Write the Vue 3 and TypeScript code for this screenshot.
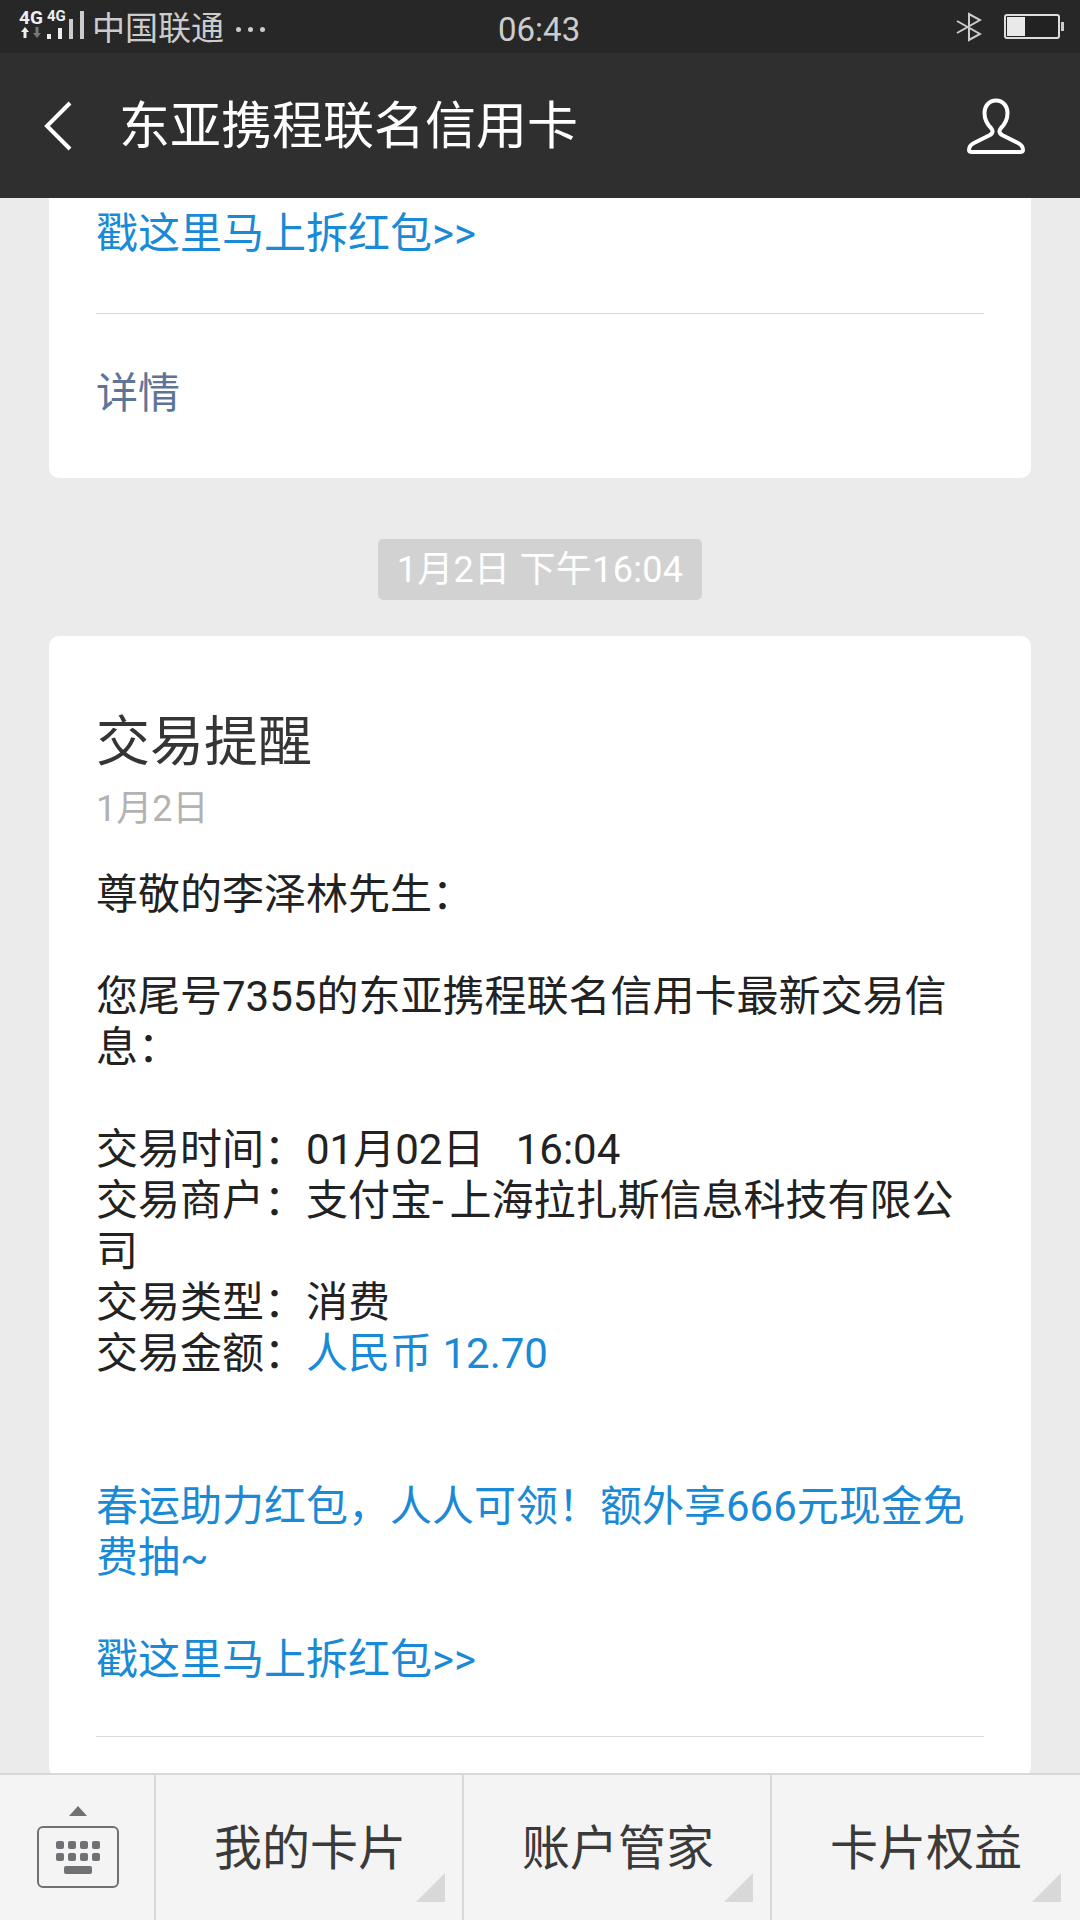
<script setup lang="ts">
const menus = ['我的卡片', '账户管家', '卡片权益']
</script>

<template>
  <div class="screen">
    <div class="status">
      <div class="net">
        <div class="net-col">
          <span class="g1">4G</span>
          <svg class="arrows" width="20" height="11" viewBox="0 0 20 11">
            <path d="M4 0 8 5H5.5V11H2.5V5H0z" fill="#eee" />
            <path d="M14.5 0h3v6H20l-4 5-4-5h2.500z" fill="#777" />
          </svg>
        </div>
        <span class="g2">4G</span>
        <svg class="bars" width="38" height="30" viewBox="0 0 38 30">
          <rect x="0" y="24" width="4" height="5" fill="#eee" />
          <rect x="11" y="18" width="4" height="11" fill="#eee" />
          <rect x="22" y="9" width="4" height="20" fill="#ccc" />
          <rect x="33" y="1" width="4" height="28" fill="#ccc" />
        </svg>
      </div>
      <span class="carrier">中国联通</span>
      <span class="dots"><i></i><i></i><i></i></span>
      <span class="time">06:43</span>
      <svg class="bt" width="26" height="30" viewBox="0 0 26 30">
        <path d="M1 9 24 22 13 28V2L24 8 1 21" fill="none" stroke="#ccc" stroke-width="2" />
      </svg>
      <div class="battery">
        <div class="battery-fill"></div>
      </div>
      <div class="battery-nub"></div>
    </div>

    <div class="nav">
      <svg class="back" width="30" height="50" viewBox="0 0 30 50">
        <path d="M27 2 4 25 27 48" fill="none" stroke="#fff" stroke-width="4" />
      </svg>
      <span class="nav-title">东亚携程联名信用卡</span>
      <svg class="person" width="60" height="56" viewBox="0 0 60 56">
        <path
          d="M30 2.500C23 2.500 18.500 8 18.500 15C18.500 22 22 27 25 30C27.500 33 27 35 24 37L8 45C4 47 3 50 3 52C3 54 4 54 6 54H54C56 54 57 54 57 52C57 50 56 47 52 45L36 37C33 35 32.500 33 35 30C38 27 41.500 22 41.500 15C41.500 8 37 2.500 30 2.500z"
          fill="none"
          stroke="#fff"
          stroke-width="4"
        />
      </svg>
    </div>

    <div class="feed">
      <div class="card card-top">
        <div class="link top-link">戳这里马上拆红包&gt;&gt;</div>
        <div class="rule"></div>
        <div class="detail">详情</div>
      </div>

      <div class="stamp-row"><span class="stamp">1月2日 下午16:04</span></div>

      <div class="card card-main">
        <div class="title">交易提醒</div>
        <div class="date">1月2日</div>
        <div class="body">
          <p>尊敬的李泽林先生：</p>
          <p>您尾号7355的东亚携程联名信用卡最新交易信息：</p>
          <p>
            交易时间：01月02日&nbsp;&nbsp;&nbsp;16:04<br />
            交易商户：支付宝-<span class="after-hy">上海拉扎斯信息科技有限公司</span><br />
            交易类型：消费<br />
            交易金额：<span class="link">人民币 12.70</span>
          </p>
          <p class="gap link">春运助力红包，人人可领！额外享666元现金免费抽~</p>
          <p class="link">戳这里马上拆红包&gt;&gt;</p>
        </div>
        <div class="rule end-rule"></div>
      </div>
    </div>

    <div class="tabbar">
      <div class="kbd-cell">
        <svg width="82" height="82" viewBox="0 0 82 82">
          <path d="M41 0 50 10H32z" fill="#6f7175" />
          <rect x="1" y="21" width="80" height="60" rx="5" fill="none" stroke="#6f7175" stroke-width="2" />
          <g fill="#6f7175">
            <rect x="19" y="35" width="8" height="8" rx="2" />
            <rect x="31" y="35" width="8" height="8" rx="2" />
            <rect x="43" y="35" width="8" height="8" rx="2" />
            <rect x="55" y="35" width="8" height="8" rx="2" />
            <rect x="19" y="47" width="8" height="8" rx="2" />
            <rect x="31" y="47" width="8" height="8" rx="2" />
            <rect x="43" y="47" width="8" height="8" rx="2" />
            <rect x="55" y="47" width="8" height="8" rx="2" />
            <rect x="27" y="60" width="28" height="8" rx="2" />
          </g>
        </svg>
      </div>
      <div v-for="m in menus" :key="m" class="menu">
        {{ m }}
        <span class="corner"></span>
      </div>
    </div>
  </div>
</template>

<style scoped>
.screen {
  position: relative;
  width: 1080px;
  height: 1920px;
  display: flex;
  flex-direction: column;
  overflow: hidden;
  background: #ebebeb;
  font-family: Roboto, "Noto Sans CJK SC", sans-serif;
  color: #222;
}
.status {
  height: 53px;
  flex: none;
  display: flex;
  align-items: center;
  padding: 0 16px 0 18px;
  background: #272727;
  color: #ccc;
}
.net {
  display: flex;
  align-items: flex-start;
  height: 30px;
  width: 74px;
  margin-top: -4px;
}
.net-col {
  display: flex;
  flex-direction: column;
  align-items: center;
  width: 26px;
}
.g1 {
  font-size: 19px;
  line-height: 16px;
  font-weight: 700;
  color: #eee;
}
.g2 {
  font-size: 15px;
  line-height: 13px;
  font-weight: 700;
  margin-left: 3px;
  color: #eee;
}
.arrows {
  margin-top: 1px;
}
.bars {
  margin-left: -19px;
}
.carrier {
  font-size: 33px;
  line-height: 40px;
  margin-top: 5px;
}
.dots {
  display: flex;
  gap: 7px;
  margin: 5px 0 0 12px;
  flex: 1;
}
.dots i {
  width: 5px;
  height: 5px;
  border-radius: 50%;
  background: #ccc;
}
.time {
  font-size: 33px;
  line-height: 40px;
  position: absolute;
  left: 498px;
  top: 10px;
}
.bt {
  margin-right: 22px;
}
.battery {
  width: 56px;
  height: 25px;
  box-sizing: border-box;
  border: 2px solid #ddd;
  border-radius: 3px;
  padding: 1px;
  background: #222;
}
.battery-fill {
  width: 18px;
  height: 100%;
  background: #e9e9e9;
}
.battery-nub {
  width: 3px;
  height: 9px;
  margin-left: 1px;
  background: #ccc;
}
.nav {
  height: 145px;
  flex: none;
  display: flex;
  align-items: center;
  padding: 0 54px 0 43px;
  background: #2f2f2f;
  color: #fff;
}
.nav-title {
  flex: 1;
  font-size: 51px;
  margin: -7px 0 0 46px;
}
.feed {
  flex: 1;
  min-height: 0;
  overflow: hidden;
}
.card {
  margin: 0 49px;
  padding: 0 47px 40px;
  background: #fff;
  border-radius: 10px;
}
.card-top {
  border-radius: 0 0 10px 10px;
  height: 280px;
  padding-top: 10px;
  box-sizing: border-box;
}
.link {
  color: #1a8ad6;
}
.top-link {
  font-size: 42px;
  line-height: 51px;
}
.rule {
  height: 1px;
  background: #d9d9d9;
}
.top-link + .rule {
  margin-top: 54px;
}
.detail {
  font-size: 42px;
  line-height: 51px;
  margin-top: 54px;
  color: #5f7597;
}
.stamp-row {
  display: flex;
  justify-content: center;
  margin: 61px 0 36px;
}
.stamp {
  width: 324px;
  height: 61px;
  line-height: 62px;
  text-align: center;
  font-size: 36px;
  letter-spacing: 0.3px;
  color: #fff;
  background: #d2d2d2;
  border-radius: 5px;
}
.card-main {
  padding-top: 74px;
}
.title {
  font-size: 54px;
  line-height: 66px;
  color: #353535;
}
.date {
  font-size: 36px;
  line-height: 44px;
  margin-top: 11px;
  color: #b2b2b2;
}
.body {
  margin-top: 38px;
  font-size: 42px;
  line-height: 51px;
}
.body p {
  margin: 0 0 51px;
}
.body p.gap {
  margin-top: 102px;
}
.after-hy {
  margin-left: 6px;
}
.end-rule {
  margin-top: 1px;
}
.tabbar {
  height: 147px;
  flex: none;
  display: flex;
  box-sizing: border-box;
  border-top: 2px solid #d8d8d8;
  background: #f4f4f5;
}
.kbd-cell {
  width: 154px;
  flex: none;
  display: flex;
  justify-content: center;
  padding: 31px 0 0 2px;
  box-sizing: border-box;
}
.menu {
  position: relative;
  width: 308px;
  flex: none;
  box-sizing: border-box;
  border-left: 2px solid #d8d8d8;
  padding-left: 2px;
  font-size: 48px;
  line-height: 147px;
  text-align: center;
  color: #3a3a3a;
}
.corner {
  position: absolute;
  right: 17px;
  bottom: 18px;
  width: 29px;
  height: 29px;
  background: #d8d8d8;
  clip-path: polygon(100% 0, 100% 100%, 0 100%);
}
</style>
